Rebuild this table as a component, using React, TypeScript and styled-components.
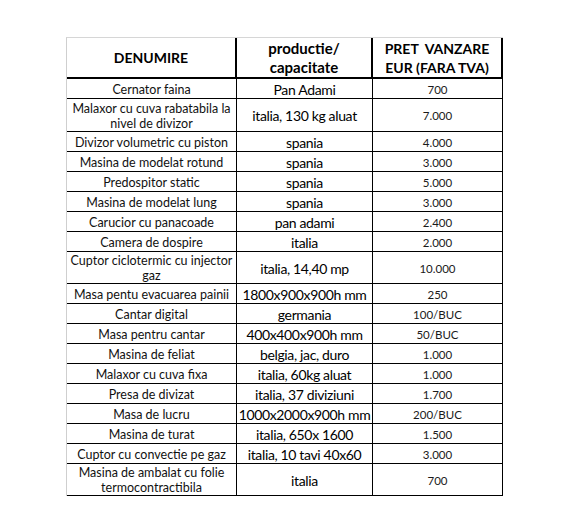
import React from "react";
import styled, { createGlobalStyle } from "styled-components";

const Global = createGlobalStyle`
  html, body { margin: 0; padding: 0; background: #ffffff; }
  body { font-family: Lato, "Open Sans", sans-serif; color: #000; }
`;

const Page = styled.div`
  padding: 37px 0 0 66px;
`;

const Sheet = styled.div`
  display: inline-flex;
  flex-direction: column;
  border-left: 1px solid #cfcfcf;
  border-top: 1px solid #d6d6d6;
`;

const Row = styled.div<{ $h: number; $head?: boolean }>`
  display: grid;
  grid-template-columns: 170px 136px 130px;
  height: ${(p) => p.$h}px;
  box-sizing: border-box;
  border-bottom: ${(p) => (p.$head ? "2px" : "1px")} solid #000;
`;

const Cell = styled.div`
  box-sizing: border-box;
  display: flex;
  flex-direction: column;
  align-items: center;
  justify-content: center;
  text-align: center;
  white-space: pre;
  border-right: 1px solid #000;
  padding-top: 1px;
  overflow: hidden;
`;

const HeadCell = styled(Cell)<{ $size: number }>`
  border-right-width: 2px;
  padding-top: 0;
  font-weight: 700;
  font-size: ${(p) => p.$size}px;
  line-height: 19px;
  color: #000;
`;

const NameCell = styled(Cell)`
  font-size: 12.5px;
  line-height: 15px;
  color: #111;
`;

const OriginCell = styled(Cell)`
  font-size: 14px;
  letter-spacing: -0.35px;
  line-height: 17px;
  color: #000;
`;

const PriceCell = styled(Cell)`
  font-size: 11.5px;
  line-height: 15px;
  color: #1a1a1a;
`;

type Item = { name: string[]; origin: string; price: string; h: number };

const items: Item[] = [
  { name: ["Cernator faina"], origin: "Pan Adami", price: "700", h: 20 },
  { name: ["Malaxor cu cuva rabatabila la", "nivel de divizor"], origin: "italia, 130 kg aluat", price: "7.000", h: 33 },
  { name: ["Divizor volumetric cu piston"], origin: "spania", price: "4.000", h: 20 },
  { name: ["Masina de modelat rotund"], origin: "spania", price: "3.000", h: 20 },
  { name: ["Predospitor static"], origin: "spania", price: "5.000", h: 20 },
  { name: ["Masina de modelat lung"], origin: "spania", price: "3.000", h: 20 },
  { name: ["Carucior cu panacoade"], origin: "pan adami", price: "2.400", h: 20 },
  { name: ["Camera de dospire"], origin: "italia", price: "2.000", h: 20 },
  { name: ["Cuptor ciclotermic cu injector", "gaz"], origin: "italia, 14,40 mp", price: "10.000", h: 32 },
  { name: ["Masa pentu evacuarea painii"], origin: "1800x900x900h mm", price: "250", h: 20 },
  { name: ["Cantar digital"], origin: "germania", price: "100/BUC", h: 20 },
  { name: ["Masa pentru cantar"], origin: "400x400x900h mm", price: "50/BUC", h: 20 },
  { name: ["Masina de feliat"], origin: "belgia, jac, duro", price: "1.000", h: 20 },
  { name: ["Malaxor cu cuva fixa"], origin: "italia, 60kg aluat", price: "1.000", h: 20 },
  { name: ["Presa de divizat"], origin: "italia, 37 diviziuni", price: "1.700", h: 20 },
  { name: ["Masa de lucru"], origin: "1000x2000x900h mm", price: "200/BUC", h: 20 },
  { name: ["Masina de turat"], origin: "italia, 650x 1600", price: "1.500", h: 20 },
  { name: ["Cuptor cu convectie pe gaz"], origin: "italia, 10 tavi 40x60", price: "3.000", h: 20 },
  { name: ["Masina de ambalat cu folie", "termocontractibila"], origin: "italia", price: "700", h: 32 },
];

export default function App() {
  return (
    <>
      <Global />
      <Page>
        <Sheet>
          <Row $h={41} $head>
            <HeadCell $size={14}>
              <span>DENUMIRE</span>
            </HeadCell>
            <HeadCell $size={15}>
              <span>productie/</span>
              <span>capacitate</span>
            </HeadCell>
            <HeadCell $size={14}>
              <span>{"PRET  VANZARE"}</span>
              <span>EUR (FARA TVA)</span>
            </HeadCell>
          </Row>
          {items.map((it, i) => (
            <Row key={i} $h={it.h}>
              <NameCell>
                {it.name.map((l, j) => (
                  <span key={j}>{l}</span>
                ))}
              </NameCell>
              <OriginCell>{it.origin}</OriginCell>
              <PriceCell>{it.price}</PriceCell>
            </Row>
          ))}
        </Sheet>
      </Page>
    </>
  );
}
